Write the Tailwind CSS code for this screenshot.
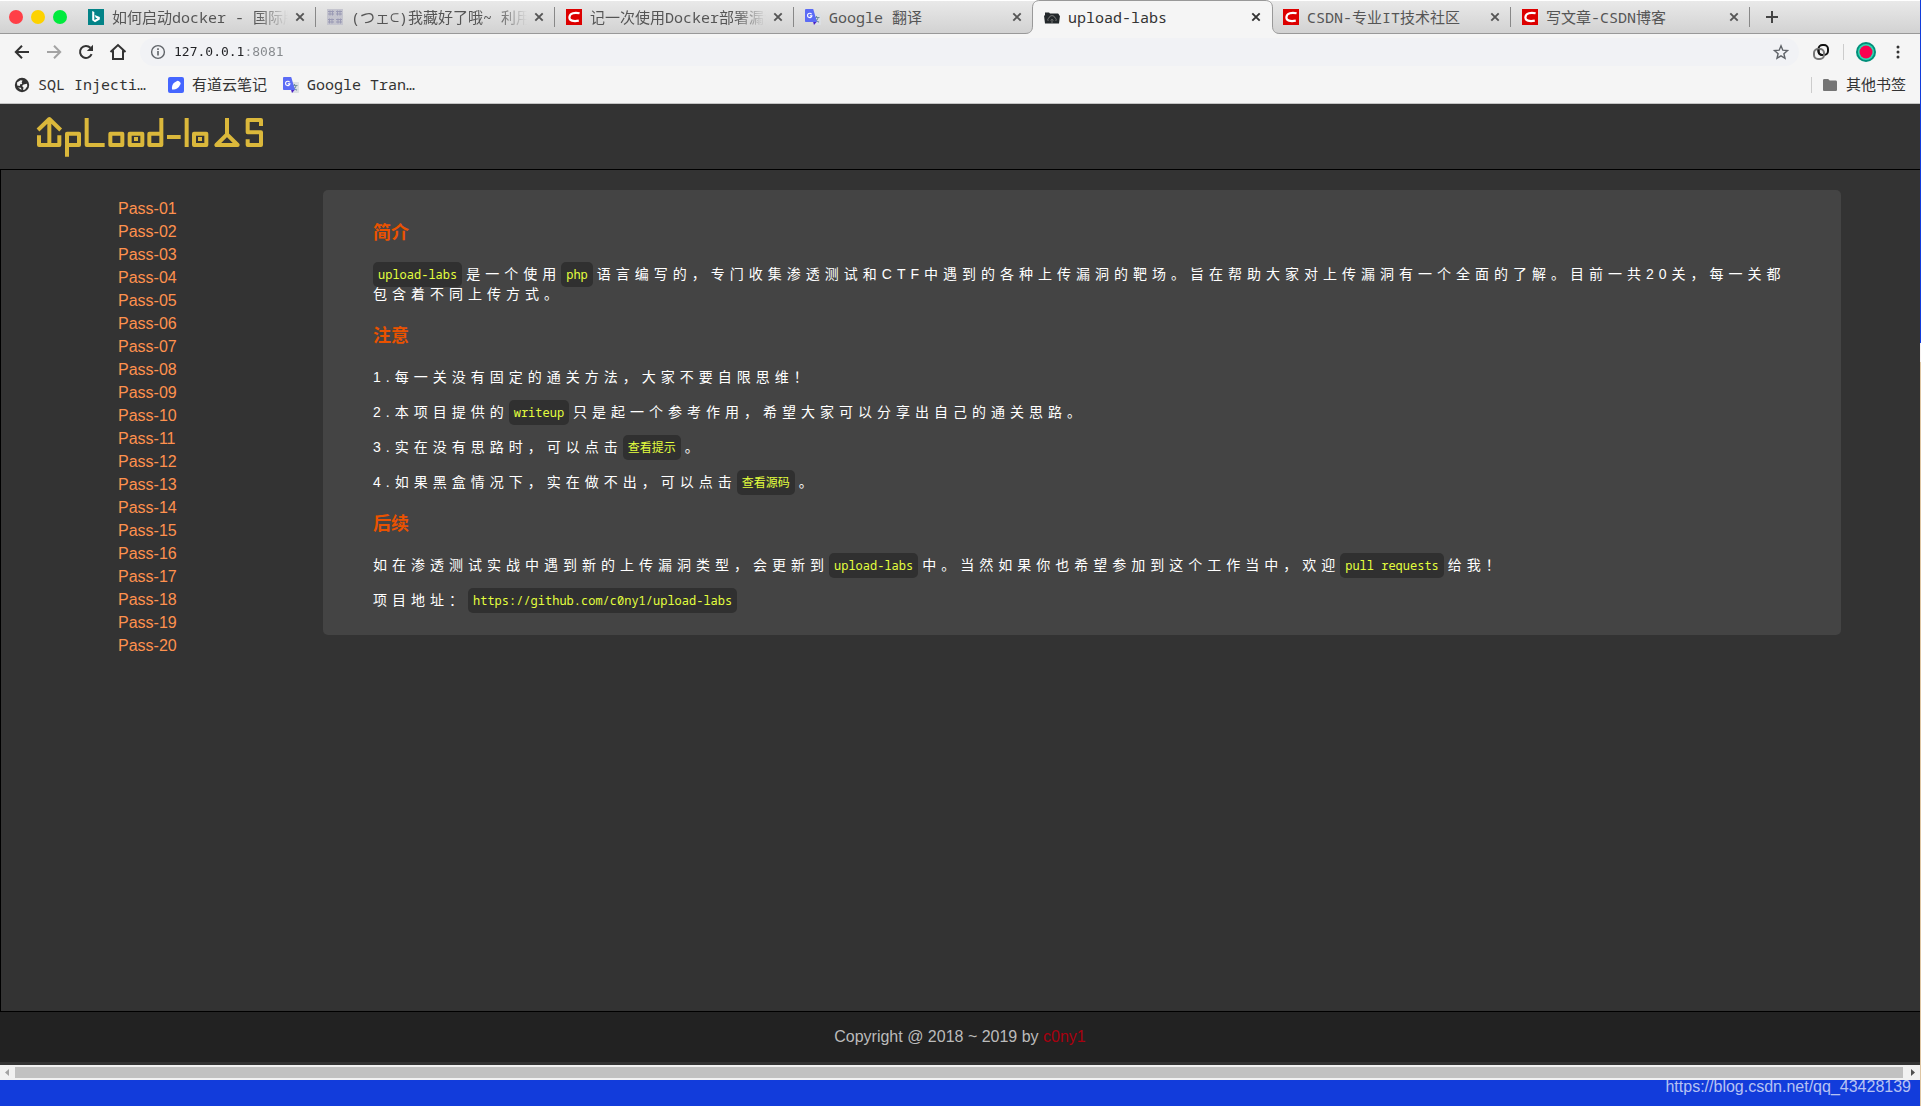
<!DOCTYPE html>
<html lang="zh-CN">
<head>
    <meta charset="UTF-8">
    <meta name="viewport" content="width=device-width, initial-scale=1.0">
    <title>upload-labs</title>
    <script src="https://cdn.jsdelivr.net/npm/@tailwindcss/browser@4"></script>
</head>
<!-- The desktop wallpaper shows in the last column, right of the window -->
<body class="flex min-h-screen flex-col bg-[linear-gradient(#123cdb_343px,#f5f0ee_343px,#f5f0ee_362px,#dfc6a2_362px)] pr-px font-['Liberation_Sans','Noto_Sans_CJK_SC',sans-serif]">

    <!-- Shared icons -->
    <svg class="hidden" aria-hidden="true">
        <symbol id="close" viewBox="0 0 16 16">
            <path d="M4.3 4.3l7.4 7.4M11.7 4.3l-7.4 7.4" fill="none" stroke="currentColor" stroke-width="1.9"/>
        </symbol>
        <symbol id="csdn" viewBox="0 0 16 16">
            <rect width="16" height="16" fill="#dd0000"/>
            <path d="M13.6 4.3C9 3.2 3.800 4 3.4 8.1c-.3 3.7 4 4.6 9.4 3.6" fill="none" stroke="#fff" stroke-width="2.2"/>
        </symbol>
        <symbol id="translate" viewBox="0 0 16 16">
            <path d="M6 5h9.3c.4 0 .7.3.7.7v9.6c0 .4-.3.7-.7.7H9z" fill="#dcdfe3"/>
            <path d="M8.5 8.5h6M11.5 7v1.5M13.2 8.5c-.4 2-2 3.7-3.4 4.5M10 9.5c.7 1.6 2.2 3 4 3.7" fill="none" stroke="#7391a0" stroke-width="1.1"/>
            <path d="M8 12.5h4L9 16z" fill="#4a22c4"/>
            <path d="M.8 0h7.4L12 13H.8a.8.8 0 0 1-.8-.8V.8C0 .4.4 0 .8 0z" fill="#5b6bf5"/>
            <path d="M6.600 5.200a2.200 2.200 0 1 0 .3 1.700H4.800" fill="none" stroke="#fff" stroke-width="1.1"/>
        </symbol>
    </svg>

    <!-- Tab strip -->
    <div role="tablist" class="flex h-[34px] items-stretch border-t border-b border-t-white border-b-[#999] bg-linear-to-b from-[#e9e9e9] to-[#d2d2d2] font-['Noto_Sans_Mono','DejaVu_Sans_Mono','Noto_Sans_CJK_SC',monospace] text-[15px] text-[#555]">
        <div class="flex w-[77px] shrink-0 items-center gap-2 pl-[9px]">
            <button aria-label="关闭" class="size-[14px] rounded-full bg-[#ff3f47]"></button>
            <button aria-label="最小化" class="size-[14px] rounded-full bg-[#fdd200]"></button>
            <button aria-label="最大化" class="size-[14px] rounded-full bg-[#00ea3d]"></button>
        </div>
        <div class="flex w-[239px] items-center pr-2 pl-[11px] bg-[linear-gradient(#888,#888)] bg-[length:1px_20px] bg-[position:right_6px] bg-no-repeat">
            <svg class="size-4 shrink-0" viewBox="0 0 16 16"><rect width="16" height="16" fill="#038387"/><path d="M4.200 2v9.300L7 13.300l4.800-2.700V7.900L6.600 6.100l1.200 2.700 1.700.7L6.300 11V3z" fill="#fff"/></svg>
            <button role="tab" class="ml-2 min-w-0 flex-1 overflow-hidden text-left whitespace-nowrap [mask-image:linear-gradient(to_right,#000_82%,transparent)]">如何启动docker - 国际版</button>
            <button aria-label="关闭标签页" class="ml-1"><svg class="size-4"><use href="#close"/></svg></button>
        </div>
        <div class="flex w-[239px] items-center pr-2 pl-[11px] bg-[linear-gradient(#888,#888)] bg-[length:1px_20px] bg-[position:right_6px] bg-no-repeat">
            <svg class="size-4 shrink-0" viewBox="0 0 16 16"><rect width="16" height="16" fill="#c4c4ce"/><path d="M1 2.500h6M1 5h6M3 1.500v5M5.500 1.500v5M9 2.500h6M9 5h6M10.500 1.500v5M13 1.500v5M1 10.500h6M1 13h6M2.500 9.500v5M5 9.500v5M9 10.500h6M9 13h6M11 9.500v5M13.500 9.500v5" stroke="#9a9ab4" stroke-width="1"/></svg>
            <button role="tab" class="ml-2 min-w-0 flex-1 overflow-hidden text-left whitespace-nowrap [mask-image:linear-gradient(to_right,#000_82%,transparent)]">(つェ⊂)我藏好了哦~ 利用</button>
            <button aria-label="关闭标签页" class="ml-1"><svg class="size-4"><use href="#close"/></svg></button>
        </div>
        <div class="flex w-[239px] items-center pr-2 pl-[11px] bg-[linear-gradient(#888,#888)] bg-[length:1px_20px] bg-[position:right_6px] bg-no-repeat">
            <svg class="size-4 shrink-0"><use href="#csdn"/></svg>
            <button role="tab" class="ml-2 min-w-0 flex-1 overflow-hidden text-left whitespace-nowrap [mask-image:linear-gradient(to_right,#000_82%,transparent)]">记一次使用Docker部署漏洞</button>
            <button aria-label="关闭标签页" class="ml-1"><svg class="size-4"><use href="#close"/></svg></button>
        </div>
        <div class="flex w-[239px] items-center pr-2 pl-[11px]">
            <svg class="size-4 shrink-0"><use href="#translate"/></svg>
            <button role="tab" class="ml-2 min-w-0 flex-1 overflow-hidden text-left whitespace-nowrap">Google 翻译</button>
            <button aria-label="关闭标签页" class="ml-1"><svg class="size-4"><use href="#close"/></svg></button>
        </div>
        <!-- Active tab, its outline flares out at the bottom -->
        <div class="relative flex w-[239px] items-center pr-2 pl-[11px] text-[#333]">
            <svg class="absolute -top-px -left-2 h-[34px] w-[255px]" viewBox="0 0 255 34">
                <path d="M0 34V33.500C5 33.500 7.500 31 7.500 26V8C7.500 3 10 .5 15 .5H240C245 .5 247.500 3 247.500 8V26C247.500 31 250 33.500 255 33.500V34z" fill="#f5f5f5"/>
                <path d="M0 33.500C5 33.500 7.500 31 7.500 26V8C7.500 3 10 .5 15 .5H240C245 .5 247.500 3 247.500 8V26C247.500 31 250 33.500 255 33.500" fill="none" stroke="#999"/>
            </svg>
            <svg class="relative size-4 shrink-0" viewBox="0 0 16 16"><path d="M1 3.500h4l1 1h7.500c.8 0 1.500.6 1.500 1.400v.6h1L15 14.500H1L0 6.500h1z" fill="#23282b"/><path d="M4.500 12a1.700 1.700 0 0 1 .4-3 3.200 3.200 0 0 1 6.200 0 1.700 1.700 0 0 1 .4 3M8 14v-3.500M6.700 11.500L8 10.200l1.300 1.300" fill="none" stroke="#777" stroke-width="1"/></svg>
            <button role="tab" aria-selected="true" class="relative ml-2 min-w-0 flex-1 overflow-hidden text-left whitespace-nowrap">upload-labs</button>
            <button aria-label="关闭标签页" class="relative ml-1"><svg class="size-4"><use href="#close"/></svg></button>
        </div>
        <div class="flex w-[239px] items-center pr-2 pl-[11px] bg-[linear-gradient(#888,#888)] bg-[length:1px_20px] bg-[position:right_6px] bg-no-repeat">
            <svg class="size-4 shrink-0"><use href="#csdn"/></svg>
            <button role="tab" class="ml-2 min-w-0 flex-1 overflow-hidden text-left whitespace-nowrap">CSDN-专业IT技术社区</button>
            <button aria-label="关闭标签页" class="ml-1"><svg class="size-4"><use href="#close"/></svg></button>
        </div>
        <div class="flex w-[239px] items-center pr-2 pl-[11px] bg-[linear-gradient(#888,#888)] bg-[length:1px_20px] bg-[position:right_6px] bg-no-repeat">
            <svg class="size-4 shrink-0"><use href="#csdn"/></svg>
            <button role="tab" class="ml-2 min-w-0 flex-1 overflow-hidden text-left whitespace-nowrap">写文章-CSDN博客</button>
            <button aria-label="关闭标签页" class="ml-1"><svg class="size-4"><use href="#close"/></svg></button>
        </div>
        <button aria-label="新标签页" class="ml-4"><svg class="size-3" viewBox="0 0 12 12"><path d="M6 0v12M0 6h12" stroke="#444" stroke-width="2"/></svg></button>
    </div>

    <!-- Toolbar -->
    <div class="flex h-9 items-center bg-[#f5f5f5] pr-[14px] pl-3 text-[#333]">
        <button aria-label="后退" class="mr-3"><svg class="size-5" viewBox="0 0 20 20"><path d="M17 10H4.500M10 3.800L3.800 10l6.200 6.200" fill="none" stroke="currentColor" stroke-width="2"/></svg></button>
        <button aria-label="前进" class="mr-3 text-[#a3a3a3]"><svg class="size-5" viewBox="0 0 20 20"><path d="M3 10h12.500M10 3.800l6.200 6.200-6.200 6.200" fill="none" stroke="currentColor" stroke-width="2"/></svg></button>
        <button aria-label="重新加载" class="mr-3"><svg class="size-5" viewBox="0 0 20 20"><path d="M15.600 12.200A6 6 0 1 1 14.400 5.800" fill="none" stroke="currentColor" stroke-width="2"/><path d="M17 2.800V9h-6.200z" fill="currentColor"/></svg></button>
        <button aria-label="主页" class="mr-3"><svg class="size-5" viewBox="0 0 20 20"><path d="M2.500 10L10 3l7.500 7M5 8.500V17h10V8.500" fill="none" stroke="currentColor" stroke-width="2"/></svg></button>
        <div class="flex h-7 flex-1 items-center rounded-full bg-[#f1f2f5] pr-2 pl-[10px]">
            <svg class="size-4 shrink-0" viewBox="0 0 16 16"><circle cx="8" cy="8" r="6.400" fill="none" stroke="#5f6368" stroke-width="1.400"/><path d="M8 7v4.500M8 4.300v1.600" stroke="#5f6368" stroke-width="1.600"/></svg>
            <input type="text" aria-label="地址栏" value="127.0.0.1:8081" class="ml-2 min-w-0 flex-1 bg-[linear-gradient(to_right,#202124_71px,#85888c_71px)] bg-clip-text font-['DejaVu_Sans_Mono',monospace] text-[13px] text-transparent outline-none">
            <button aria-label="为此网页添加书签"><svg class="size-5" viewBox="0 0 20 20"><path d="M10 3.800l1.800 4.400 4.700.4-3.600 3.100 1.100 4.600-4-2.500-4 2.500 1.100-4.600-3.600-3.100 4.700-.4z" fill="none" stroke="#5f6368" stroke-width="1.400"/></svg></button>
        </div>
        <button aria-label="扩展程序" class="ml-[14px]"><svg class="size-4" viewBox="0 0 16 16" fill="none" stroke-width="2"><rect x="5.500" y="1" width="9.500" height="10" rx="4" stroke="#111"/><rect x="1" y="5" width="10" height="10" rx="4" stroke="#777"/><path d="M5.500 5.500v2a3.500 3.500 0 0 0 3.500 3.500" stroke="#111"/></svg></button>
        <span class="ml-[14px] h-4 w-px bg-[#ccc]"></span>
        <button aria-label="用户" class="ml-3"><svg class="size-5" viewBox="0 0 20 20"><circle cx="10" cy="10" r="10" fill="#008f7a"/><circle cx="10" cy="10" r="8" fill="#2fdcb4"/><circle cx="10" cy="10" r="6.500" fill="#fb0050"/></svg></button>
        <button aria-label="菜单" class="ml-[14px]"><svg class="size-4" viewBox="0 0 16 16" fill="currentColor"><circle cx="8" cy="3" r="1.500"/><circle cx="8" cy="8" r="1.500"/><circle cx="8" cy="13" r="1.500"/></svg></button>
    </div>

    <!-- Bookmarks bar -->
    <div class="flex h-[34px] items-center border-b border-[#c4c4c4] bg-[#f5f5f5] px-[14px] pb-1 font-['Noto_Sans_Mono','DejaVu_Sans_Mono','Noto_Sans_CJK_SC',monospace] text-[15px] text-[#333]">
        <a href="#" class="mr-[22px] flex items-center gap-2">
            <svg class="size-4" viewBox="0 0 16 16"><circle cx="8" cy="8" r="7.200" fill="#333"/><path d="M3 5.500l3.500-2.300 2 .3-.8 2 .5 1.500-2 .3-.4 1.700-2.600-.6zM9.500 7.500l3.500-.8.3 2.500-2.300 3.300-2 .5.500-2.500-1.500-1.500zM4 10.500l3 .2.500 2.300" fill="#f5f5f5"/></svg>
            SQL Injecti…
        </a>
        <a href="#" class="mr-4 flex items-center gap-2">
            <svg class="size-4" viewBox="0 0 16 16"><rect width="16" height="16" rx="2" fill="#4566ff"/><path d="M4 12.500c-.3-3 .3-5.500 2.500-7l3-1.700c1.300 0 3.300 1.700 3.200 3L11 9.700c-1.500 2-4 2.800-7 2.800z" fill="#fff"/></svg>
            有道云笔记
        </a>
        <a href="#" class="flex items-center gap-2">
            <svg class="size-4"><use href="#translate"/></svg>
            Google Tran…
        </a>
        <span class="ml-auto h-4 w-px bg-[#ccc]"></span>
        <a href="#" class="ml-[10px] flex items-center gap-2">
            <svg class="size-4" viewBox="0 0 16 16"><path d="M2.200 2h4l1.500 1.600h6c.7 0 1.300.6 1.300 1.300v7.800c0 .7-.6 1.300-1.300 1.300H2.200c-.7 0-1.200-.6-1.200-1.300V3.300C1 2.600 1.500 2 2.200 2z" fill="#757575"/></svg>
            其他书签
        </a>
    </div>

    <!-- Page -->
    <div class="flex flex-1 flex-col bg-[#333]">
        <header class="h-[65px] px-9 pt-3">
            <a href="#" aria-label="upload-labs" class="inline-block">
                <svg class="h-[42px] w-[228px]" viewBox="108 48 684 126" fill="none" stroke="#dbb83b" stroke-width="12" stroke-linejoin="round">
                    <path d="M148 58V135M114 90L148 57L182 90M117 106V135H178V106"/>
                    <path d="M201 170V101H237V135H201"/>
                    <path d="M260 54V135H314"/>
                    <path d="M331 101H367V135H331z"/>
                    <path d="M389 101H427V135H389zM402 117H414"/>
                    <path d="M484 54V135H448V101H484"/>
                    <path d="M501 111H542M560 54V141"/>
                    <path d="M582 101H619V135H582zM594 117H606"/>
                    <path d="M681 54V102M681 103L649 135H713z"/>
                    <path d="M783 78V60H743V97H783V135H743V118"/>
                </svg>
            </a>
        </header>

        <main class="flex flex-1 items-start border-y border-l border-black pt-5 pr-[79px]">
            <nav class="w-[322px] shrink-0 pt-[7px] pl-[117px]">
                <ul class="text-base leading-[23px] text-[#ff914e]">
                    <li><a href="#">Pass-01</a></li>
                    <li><a href="#">Pass-02</a></li>
                    <li><a href="#">Pass-03</a></li>
                    <li><a href="#">Pass-04</a></li>
                    <li><a href="#">Pass-05</a></li>
                    <li><a href="#">Pass-06</a></li>
                    <li><a href="#">Pass-07</a></li>
                    <li><a href="#">Pass-08</a></li>
                    <li><a href="#">Pass-09</a></li>
                    <li><a href="#">Pass-10</a></li>
                    <li><a href="#">Pass-11</a></li>
                    <li><a href="#">Pass-12</a></li>
                    <li><a href="#">Pass-13</a></li>
                    <li><a href="#">Pass-14</a></li>
                    <li><a href="#">Pass-15</a></li>
                    <li><a href="#">Pass-16</a></li>
                    <li><a href="#">Pass-17</a></li>
                    <li><a href="#">Pass-18</a></li>
                    <li><a href="#">Pass-19</a></li>
                    <li><a href="#">Pass-20</a></li>
                </ul>
            </nav>

            <article class="flex min-w-0 flex-1 flex-col gap-[15px] rounded-[5px] bg-[#444] px-[50px] pt-[26px] pb-[25px] text-sm leading-5 tracking-[5px] text-white [&_code]:mr-1 [&_code]:rounded-[5px] [&_code]:bg-[#303030] [&_code]:px-[5px] [&_code]:py-1 [&_code]:font-['Noto_Sans_Mono','DejaVu_Sans_Mono','Noto_Sans_CJK_SC',monospace] [&_code]:text-xs [&_code]:leading-none [&_code]:tracking-normal [&_code]:text-[#e4ff3e] [&_h3]:pt-[2px] [&_h3]:text-lg [&_h3]:leading-[31px] [&_h3]:font-bold [&_h3]:tracking-normal [&_h3]:text-[#ea5200]">
                <h3>简介</h3>
                <p><code>upload-labs</code>是一个使用<code>php</code>语言编写的，专门收集渗透测试和CTF中遇到的各种上传漏洞的靶场。旨在帮助大家对上传漏洞有一个全面的了解。目前一共20关，每一关都包含着不同上传方式。</p>
                <h3>注意</h3>
                <p>1.每一关没有固定的通关方法，大家不要自限思维！</p>
                <p>2.本项目提供的<code>writeup</code>只是起一个参考作用，希望大家可以分享出自己的通关思路。</p>
                <p>3.实在没有思路时，可以点击<code>查看提示</code>。</p>
                <p>4.如果黑盒情况下，实在做不出，可以点击<code>查看源码</code>。</p>
                <h3>后续</h3>
                <p>如在渗透测试实战中遇到新的上传漏洞类型，会更新到<code>upload-labs</code>中。当然如果你也希望参加到这个工作当中，欢迎<code>pull requests</code>给我！</p>
                <p>项目地址：<a href="https://github.com/c0ny1/upload-labs"><code>https://github.com/c0ny1/upload-labs</code></a></p>
            </article>
        </main>

        <footer class="mb-[3px] flex h-[50px] items-center justify-center bg-[#222] text-base text-[#bbb]">
            <p>Copyright @ 2018 ~ 2019 by <a href="#" class="text-[#a8000f]">c0ny1</a></p>
        </footer>
    </div>

    <!-- Horizontal scrollbar -->
    <div class="flex h-[15px] items-center bg-[#f1f1f1]">
        <svg class="h-[15px] w-[15px]" viewBox="0 0 15 15"><path d="M9 4v7L5 7.500z" fill="#a3a3a3"/></svg>
        <div class="h-[11px] flex-1 bg-[#c1c1c1]"></div>
        <svg class="h-[15px] w-[17px]" viewBox="0 0 17 15"><path d="M8 4v7l4-3.500z" fill="#505050"/></svg>
    </div>

    <!-- Desktop strip under the window -->
    <div class="h-[26px] bg-[#123cdb] pr-[9px] text-right text-base leading-[14px] text-white/70">https://blog.csdn.net/qq_43428139</div>

</body>
</html>
